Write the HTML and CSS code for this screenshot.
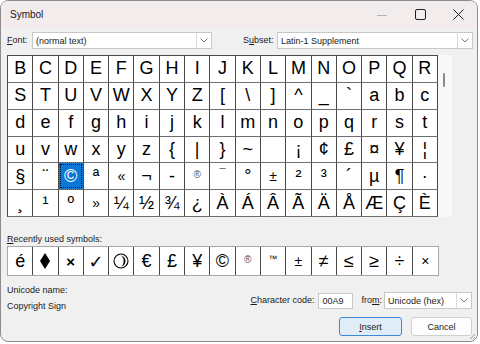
FILE: index.html
```html
<!DOCTYPE html>
<html lang="en">
<head>
    <meta charset="UTF-8">
    <title>Symbol</title>
    <link rel="stylesheet" href="styles.css">
</head>
<body>
    <div class="window">
        <!-- Title bar -->
        <div class="titlebar">
            <span class="title">Symbol</span>
            <div class="caption-btns">
                <span class="cap-btn"><svg width="10" height="10" viewBox="0 0 10 10"><line x1="0" y1="5.5" x2="10" y2="5.5" stroke="#b5b5b5" stroke-width="1"/></svg></span>
                <span class="cap-btn"><svg width="11" height="11" viewBox="0 0 11 11"><rect x="0.5" y="0.5" width="10" height="10" rx="1.5" fill="none" stroke="#1f1f1f" stroke-width="1"/></svg></span>
                <span class="cap-btn"><svg width="11" height="11" viewBox="0 0 11 11"><path d="M0.5 0.5 L10.5 10.5 M10.5 0.5 L0.5 10.5" stroke="#1f1f1f" stroke-width="1"/></svg></span>
            </div>
        </div>

        <div class="body">
            <!-- Font / Subset -->
            <div class="font-row">
                <span class="lbl font-lbl"><u>F</u>ont:</span>
                <div class="combo font-combo">
                    <span class="combo-text">(normal text)</span>
                    <span class="combo-arrow"><svg width="8" height="5" viewBox="0 0 8 5"><path d="M0.5 0.5 L4 4 L7.5 0.5" fill="none" stroke="#777" stroke-width="1"/></svg></span>
                </div>
                <span class="lbl subset-lbl">S<u>u</u>bset:</span>
                <div class="combo subset-combo">
                    <span class="combo-text">Latin-1 Supplement</span>
                    <span class="combo-arrow"><svg width="8" height="5" viewBox="0 0 8 5"><path d="M0.5 0.5 L4 4 L7.5 0.5" fill="none" stroke="#777" stroke-width="1"/></svg></span>
                </div>
            </div>

            <!-- Character grid -->
            <div class="grid-wrap">
                <div class="grid">
                    <span class="cell">B</span><span class="cell">C</span><span class="cell">D</span><span class="cell">E</span><span class="cell">F</span><span class="cell">G</span><span class="cell">H</span><span class="cell">I</span><span class="cell">J</span><span class="cell">K</span><span class="cell">L</span><span class="cell">M</span><span class="cell">N</span><span class="cell">O</span><span class="cell">P</span><span class="cell">Q</span><span class="cell">R</span>
                    <span class="cell">S</span><span class="cell">T</span><span class="cell">U</span><span class="cell">V</span><span class="cell">W</span><span class="cell">X</span><span class="cell">Y</span><span class="cell">Z</span><span class="cell">[</span><span class="cell">\</span><span class="cell">]</span><span class="cell">^</span><span class="cell">_</span><span class="cell">`</span><span class="cell">a</span><span class="cell">b</span><span class="cell">c</span>
                    <span class="cell">d</span><span class="cell">e</span><span class="cell">f</span><span class="cell">g</span><span class="cell">h</span><span class="cell">i</span><span class="cell">j</span><span class="cell">k</span><span class="cell">l</span><span class="cell">m</span><span class="cell">n</span><span class="cell">o</span><span class="cell">p</span><span class="cell">q</span><span class="cell">r</span><span class="cell">s</span><span class="cell">t</span>
                    <span class="cell">u</span><span class="cell">v</span><span class="cell">w</span><span class="cell">x</span><span class="cell">y</span><span class="cell">z</span><span class="cell">{</span><span class="cell">|</span><span class="cell">}</span><span class="cell">~</span><span class="cell"></span><span class="cell">¡</span><span class="cell">¢</span><span class="cell">£</span><span class="cell">¤</span><span class="cell">¥</span><span class="cell">¦</span>
                    <span class="cell">§</span><span class="cell">¨</span><span class="cell selected"><span class="sel-box">©</span></span><span class="cell">ª</span><span class="cell small">«</span><span class="cell">¬</span><span class="cell">-</span><span class="cell sup">®</span><span class="cell macron">¯</span><span class="cell">°</span><span class="cell small">±</span><span class="cell">²</span><span class="cell">³</span><span class="cell">´</span><span class="cell">µ</span><span class="cell">¶</span><span class="cell">·</span>
                    <span class="cell">¸</span><span class="cell">¹</span><span class="cell">º</span><span class="cell small">»</span><span class="cell">¼</span><span class="cell">½</span><span class="cell">¾</span><span class="cell">¿</span><span class="cell">À</span><span class="cell">Á</span><span class="cell">Â</span><span class="cell">Ã</span><span class="cell">Ä</span><span class="cell">Å</span><span class="cell">Æ</span><span class="cell">Ç</span><span class="cell">È</span>
                </div>
                <div class="scroll"><span class="thumb"></span></div>
            </div>

            <!-- Recently used -->
            <div class="lbl recent-lbl"><u>R</u>ecently used symbols:</div>
            <div class="recent">
                <span class="cell">é</span>
                <span class="cell"><svg width="10" height="16" viewBox="0 0 10 16"><polygon points="5,0 10,8 5,16 0,8" fill="#000"/></svg></span>
                <span class="cell bold-x">×</span>
                <span class="cell check">✓</span>
                <span class="cell"><svg width="16" height="16" viewBox="-8 -8 16 16"><circle r="7" fill="none" stroke="#000" stroke-width="1.1"/><path d="M-1 -5.5 A5.5 5.5 0 0 1 -1 5.5 A3.5 5.2 0 0 0 -1 -5.5 Z" fill="#000"/></svg></span>
                <span class="cell">€</span>
                <span class="cell">£</span>
                <span class="cell">¥</span>
                <span class="cell">©</span>
                <span class="cell sup">®</span>
                <span class="cell tm">™</span>
                <span class="cell small">±</span>
                <span class="cell">≠</span>
                <span class="cell">≤</span>
                <span class="cell">≥</span>
                <span class="cell">÷</span>
                <span class="cell small">×</span>
            </div>

            <!-- Bottom section -->
            <div class="bottom">
                <div class="uname">
                    <div class="lbl">Unicode name:</div>
                    <div class="lbl uname-value">Copyright Sign</div>
                </div>
                <div class="actions">
                    <div class="code-row">
                        <span class="lbl"><u>C</u>haracter code:</span>
                        <span class="code-input">00A9</span>
                        <span class="lbl from-lbl">fro<u>m</u>:</span>
                        <div class="combo from-combo">
                            <span class="combo-text">Unicode (hex)</span>
                            <span class="combo-arrow"><svg width="8" height="5" viewBox="0 0 8 5"><path d="M0.5 0.5 L4 4 L7.5 0.5" fill="none" stroke="#777" stroke-width="1"/></svg></span>
                        </div>
                    </div>
                    <div class="btn-row">
                        <span class="btn btn-default"><u>I</u>nsert</span>
                        <span class="btn">Cancel</span>
                    </div>
                </div>
            </div>
        </div>

        <svg class="grip" width="7" height="7" viewBox="0 0 7 7"><path d="M6 1 L1 6 M6 4 L4 6" stroke="#9a9a9a" stroke-width="1"/></svg>
    </div>
</body>
</html>
```

FILE: styles.css
```css
html, body {
    margin: 0;
    padding: 0;
    background: #fff;
}
body {
    font-family: "Liberation Sans", Arial, sans-serif;
    color: #1a1a1a;
}
.window {
    position: relative;
    width: 478px;
    height: 342px;
    box-sizing: border-box;
    border: 1px solid #8c8c8c;
    border-radius: 8px;
    background: #f0f0f0;
    overflow: hidden;
    display: flex;
    flex-direction: column;
}
/* Title bar */
.titlebar {
    height: 27px;
    background: #f3ecec;
    display: flex;
    align-items: center;
    justify-content: space-between;
}
.title {
    font-size: 10px;
    padding-left: 9px;
    color: #1a1a1a;
}
.caption-btns {
    display: flex;
    height: 100%;
}
.cap-btn {
    width: 38px;
    height: 100%;
    display: flex;
    align-items: center;
    justify-content: center;
}
/* Body */
.body {
    flex: 1;
    padding: 0 5px 0 6px;
    display: flex;
    flex-direction: column;
}
.lbl {
    font-size: 9px;
    line-height: 11px;
    color: #1a1a1a;
    white-space: nowrap;
}
.font-row {
    margin-top: 4px;
    height: 17px;
    display: flex;
    align-items: center;
}
.font-lbl { width: 25px; }
.subset-lbl { margin-left: 31px; width: 34px; }
.combo {
    height: 17px;
    box-sizing: border-box;
    border: 1px solid #c8c8c8;
    background: #fff;
    display: flex;
    align-items: center;
}
.combo-text {
    flex: 1;
    font-size: 9px;
    padding-left: 3px;
    color: #1a1a1a;
    white-space: nowrap;
}
.combo-arrow {
    width: 14px;
    height: 100%;
    border-left: 1px solid #dcdcdc;
    display: flex;
    align-items: center;
    justify-content: center;
}
.font-combo { width: 180px; }
.subset-combo { flex: 1; margin-right: -1px; }
/* Character grid */
.grid-wrap {
    margin-top: 6px;
    display: flex;
    height: 162px;
}
.grid {
    width: 431px;
    box-sizing: border-box;
    border-left: 1px solid #4a4a4a;
    border-top: 1px solid #4a4a4a;
    background: #fff;
    display: grid;
    grid-template-columns: repeat(17, 1fr);
    grid-template-rows: repeat(6, 1fr);
}
.cell {
    box-sizing: border-box;
    border-right: 1px solid #4a4a4a;
    border-bottom: 1px solid #6e6e6e;
    display: flex;
    align-items: center;
    justify-content: center;
    font-size: 18px;
    color: #000;
    overflow: hidden;
}
.cell.small { font-size: 14px; }
.cell.sup { font-size: 10px; align-items: flex-start; padding-top: 6px; color: #555; }
.cell.macron { font-size: 11px; align-items: flex-start; padding-top: 4px; }
.cell.selected {
    background: #0a78d7;
    color: #fff;
    padding: 1px;
}
.sel-box {
    width: 100%;
    height: 100%;
    box-sizing: border-box;
    border: 1px dotted #111;
    display: flex;
    align-items: center;
    justify-content: center;
}
.scroll {
    width: 14px;
    background: #f8f8f8;
    position: relative;
}
.thumb {
    position: absolute;
    left: 5px;
    top: 18px;
    width: 2px;
    height: 14px;
    border-radius: 1px;
    background: #8a8a8a;
}
/* Recently used */
.recent-lbl {
    margin-top: 17px;
}
.recent {
    margin-top: 1px;
    width: 432px;
    height: 30px;
    box-sizing: border-box;
    border: 1px solid #a8a8a8;
    background: #fff;
    display: grid;
    grid-template-columns: repeat(17, 1fr);
}
.recent .cell {
    border-bottom: none;
}
.recent .cell:last-child {
    border-right: none;
}
.recent .cell.sup { padding-top: 7px; }
.bold-x { font-weight: bold; font-size: 15px; }
.check { font-family: "DejaVu Sans", sans-serif; font-size: 18px; font-weight: bold; }
.tm { font-size: 9px; align-items: flex-start; padding-top: 7px; }
/* Bottom */
.bottom {
    margin-top: 9px;
    display: flex;
    justify-content: space-between;
}
.uname-value {
    margin-top: 5px;
}
.actions {
    display: flex;
    flex-direction: column;
    align-items: flex-end;
}
.code-row {
    margin-top: 7px;
    height: 17px;
    display: flex;
    align-items: center;
}
.code-input {
    margin-left: 4px;
    width: 35px;
    height: 16px;
    box-sizing: border-box;
    border: 1px solid #c8c8c8;
    background: #fff;
    font-size: 9px;
    line-height: 14px;
    padding-left: 3px;
}
.from-lbl { margin-left: 8px; }
.from-combo { margin-left: 2px; width: 88px; }
.btn-row {
    margin-top: 8px;
    display: flex;
    gap: 9px;
}
.btn {
    width: 61px;
    height: 19px;
    box-sizing: border-box;
    border: 1px solid #cfcfcf;
    border-radius: 3px;
    background: #fdfdfd;
    font-size: 9px;
    display: flex;
    align-items: center;
    justify-content: center;
    color: #1a1a1a;
}
.btn-default {
    width: 63px;
    border: 1px solid #3d8ad6;
    background: #e0ecf8;
}
.grip {
    position: absolute;
    right: 1px;
    bottom: 1px;
}
```
